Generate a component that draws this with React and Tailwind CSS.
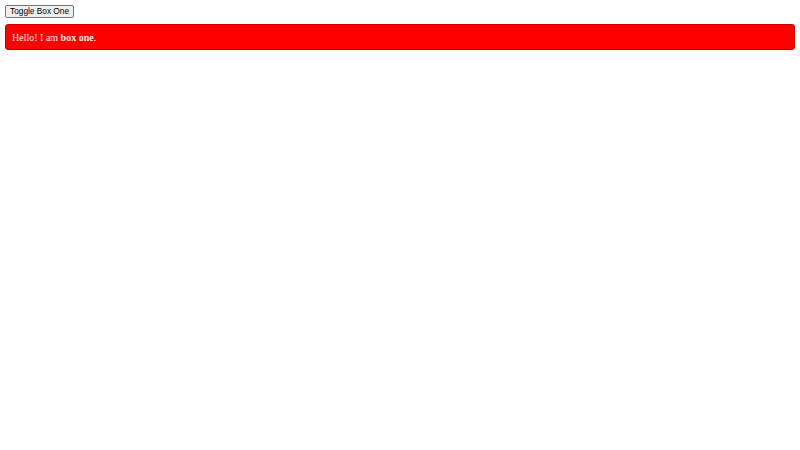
import React, { useState } from 'react'

export default function App(){
const [show, setShow] = useState(true)

return (
<div className="min-h-[450px] bg-white p-[5px] font-['Liberation_Serif',serif]">
<button onClick={()=>setShow(!show)} className="block h-[13px] px-[4px] border border-[#767676] rounded-[2px] bg-[#efefef] text-black text-[8.3px] leading-[11px] font-['Liberation_Sans',Arial,sans-serif]">Toggle Box One</button>
{show && (
<div className="mt-[6px] h-[26px] flex items-center px-[6px] bg-[#ff0000] border border-[#c40000] rounded-[3px] text-[#ffeaea] text-[10px]">
<span>Hello! I am <b>box one</b>.</span>
</div>
)}
</div>
)
}
